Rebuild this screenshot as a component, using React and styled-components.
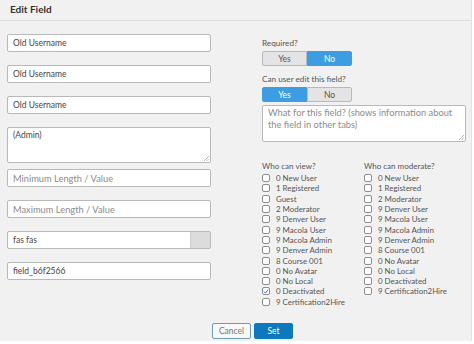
import React from "react";
import styled, { createGlobalStyle } from "styled-components";

const GlobalStyle = createGlobalStyle`
  html, body {
    margin: 0;
    padding: 0;
    background: #ffffff;
    font-family: "Lato", "Open Sans", sans-serif;
  }
`;

const Panel = styled.div`
  width: 472px;
  height: 341px;
  background-color: #f1f1f1;
  border-right: 1px solid #e2e2e2;
  box-sizing: border-box;
  display: flex;
  flex-direction: column;
`;

const Header = styled.div`
  height: 21px;
  border-bottom: 1px solid #dedede;
  box-sizing: border-box;
  padding: 3px 0 0 10px;
  font-size: 10px;
  font-weight: 700;
  color: #333;
`;

const Body = styled.div`
  display: flex;
  padding-left: 7px;
`;

const LeftColumn = styled.div`
  width: 204px;
  display: flex;
  flex-direction: column;
`;

const RightColumn = styled.div`
  margin-left: 51px;
  width: 204px;
  display: flex;
  flex-direction: column;
  padding-top: 17px;
`;

const TextInput = styled.div`
  margin-top: ${(p) => p.$mt}px;
  height: 18px;
  box-sizing: border-box;
  background: #fff;
  border: 1px solid #b9b9b9;
  border-radius: 2px;
  display: flex;
  align-items: center;
  padding-left: 5px;
  font-size: ${(p) => (p.$big ? "9.3px" : "8.5px")};
  color: ${(p) => (p.$big ? "#8c8c8c" : "#444")};
  overflow: hidden;
  position: relative;
`;

const AddonBox = styled.div`
  position: absolute;
  right: 0;
  top: 0;
  bottom: 0;
  width: 19px;
  background: #dcdcdc;
  border-left: 1px solid #cfcfcf;
`;

const TextArea = styled.div`
  margin-top: ${(p) => p.$mt}px;
  height: ${(p) => p.$h}px;
  box-sizing: border-box;
  background: #fff;
  border: 1px solid #b9b9b9;
  border-radius: 2px;
  padding: ${(p) => (p.$big ? "1px 5px" : "2px 5px")};
  font-size: ${(p) => (p.$big ? "9.3px" : "8.5px")};
  line-height: ${(p) => (p.$big ? "12px" : "10px")};
  color: ${(p) => (p.$big ? "#8c8c8c" : "#444")};
  position: relative;
`;

const Grip = styled.svg`
  position: absolute;
  right: 1px;
  bottom: 1px;
`;

const Label = styled.div`
  font-size: 8.2px;
  color: #555;
  line-height: 11px;
  margin-top: ${(p) => p.$mt || 0}px;
`;

const Toggle = styled.div`
  margin-top: 2px;
  display: flex;
  width: 90px;
  height: 15px;
`;

const ToggleHalf = styled.div`
  flex: 1;
  display: flex;
  align-items: center;
  justify-content: center;
  font-size: 8.5px;
  box-sizing: border-box;
  background: ${(p) => (p.$on ? "#3d9de2" : "#e4e4e4")};
  color: ${(p) => (p.$on ? "#fff" : "#555")};
  border: 1px solid ${(p) => (p.$on ? "#3d9de2" : "#b8b8b8")};
  border-radius: ${(p) => (p.$left ? "2px 0 0 2px" : "0 2px 2px 0")};
`;

const Lists = styled.div`
  display: flex;
  margin-top: 19px;
`;

const List = styled.div`
  width: 106px;
  display: flex;
  flex-direction: column;
`;

const ListTitle = styled.div`
  font-size: 8px;
  color: #555;
  line-height: 11px;
  margin-bottom: 1px;
`;

const Row = styled.div`
  display: flex;
  align-items: center;
  height: 10.3px;
  font-size: 7.9px;
  color: #555;
  white-space: nowrap;
`;

const Box = styled.div`
  width: 8px;
  height: 8px;
  box-sizing: border-box;
  border: 1px solid #8d8d8d;
  border-radius: 2px;
  background: #fff;
  margin-right: 6px;
  display: flex;
  align-items: center;
  justify-content: center;
`;

const Footer = styled.div`
  display: flex;
  justify-content: center;
  gap: 3px;
  margin-top: auto;
  margin-bottom: 2px;
  padding-left: 34px;
`;

const Button = styled.div`
  width: 39px;
  height: 16px;
  box-sizing: border-box;
  display: flex;
  align-items: center;
  justify-content: center;
  font-size: 8.5px;
  border-radius: 2px;
  background: ${(p) => (p.$primary ? "#0c78be" : "#f8f8f8")};
  color: ${(p) => (p.$primary ? "#fff" : "#777")};
  border: 1px solid ${(p) => (p.$primary ? "#0c78be" : "#6f9bb4")};
`;

const viewers = [
  "0 New User",
  "1 Registered",
  "Guest",
  "2 Moderator",
  "9 Denver User",
  "9 Macola User",
  "9 Macola Admin",
  "9 Denver Admin",
  "8 Course 001",
  "0 No Avatar",
  "0 No Local",
  "0 Deactivated",
  "9 Certification2Hire",
];

const moderators = [
  "0 New User",
  "1 Registered",
  "2 Moderator",
  "9 Denver User",
  "9 Macola User",
  "9 Macola Admin",
  "9 Denver Admin",
  "8 Course 001",
  "0 No Avatar",
  "0 No Local",
  "0 Deactivated",
  "9 Certification2Hire",
];

const ResizeGrip = () => (
  <Grip width="5" height="5" viewBox="0 0 5 5">
    <path d="M5 0L0 5M5 2.5L2.5 5" stroke="#999" strokeWidth="0.7" />
  </Grip>
);

const Check = ({ checked, label }) => (
  <Row>
    <Box>
      {checked && (
        <svg width="7" height="7" viewBox="0 0 8 8">
          <path d="M1.2 4.2L3.2 6.2L6.8 1.6" fill="none" stroke="#1e6fd0" strokeWidth="1.3" />
        </svg>
      )}
    </Box>
    {label}
  </Row>
);

const App = () => {
  return (
    <>
      <GlobalStyle />
      <Panel>
        <Header>Edit Field</Header>
        <Body>
          <LeftColumn>
            <TextInput $mt={13}>Old Username</TextInput>
            <TextInput $mt={13}>Old Username</TextInput>
            <TextInput $mt={13}>Old Username</TextInput>
            <TextArea $mt={13} $h={36}>
              (Admin)
              <ResizeGrip />
            </TextArea>
            <TextInput $mt={6} $big>Minimum Length / Value</TextInput>
            <TextInput $mt={13} $big>Maximum Length / Value</TextInput>
            <TextInput $mt={13}>
              fas fas
              <AddonBox />
            </TextInput>
            <TextInput $mt={13}>field_b6f2566</TextInput>
          </LeftColumn>
          <RightColumn>
            <Label>Required?</Label>
            <Toggle>
              <ToggleHalf $left>Yes</ToggleHalf>
              <ToggleHalf $on>No</ToggleHalf>
            </Toggle>
            <Label $mt={8}>Can user edit this field?</Label>
            <Toggle>
              <ToggleHalf $left $on>Yes</ToggleHalf>
              <ToggleHalf>No</ToggleHalf>
            </Toggle>
            <TextArea $mt={3} $h={37} $big>
              What for this field? (shows information about the field in other tabs)
              <ResizeGrip />
            </TextArea>
            <Lists>
              <List>
                <ListTitle>Who can view?</ListTitle>
                {viewers.map((v) => (
                  <Check key={v} label={v} checked={v === "0 Deactivated"} />
                ))}
              </List>
              <List>
                <ListTitle>Who can moderate?</ListTitle>
                {moderators.map((v) => (
                  <Check key={v} label={v} />
                ))}
              </List>
            </Lists>
          </RightColumn>
        </Body>
        <Footer>
          <Button>Cancel</Button>
          <Button $primary>Set</Button>
        </Footer>
      </Panel>
    </>
  );
};

export default App;
